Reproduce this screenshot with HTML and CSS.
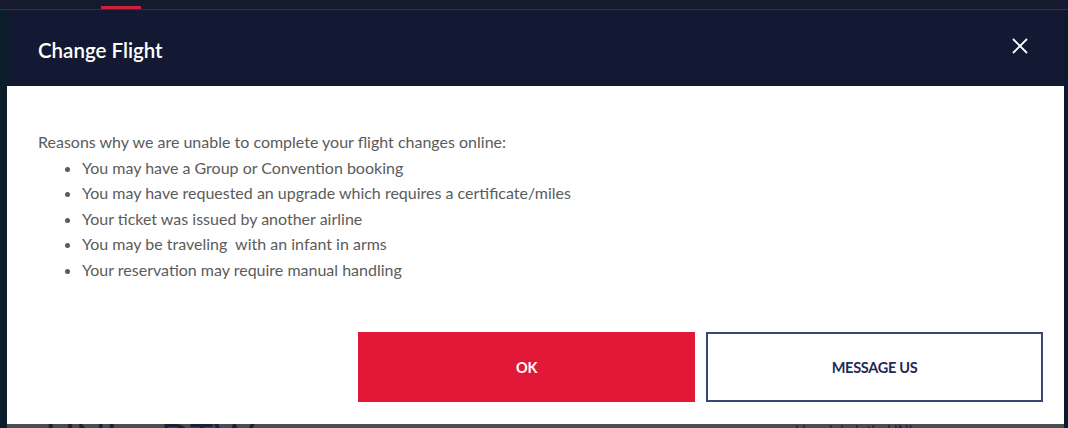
FILE: index.html
```html
<!DOCTYPE html>
<html lang="en">
<head>
    <meta charset="UTF-8">
    <meta name="viewport" content="width=device-width, initial-scale=1.0">
    <title>Change Flight</title>
    <link rel="stylesheet" href="styles.css">
</head>
<body>
    <div class="topnav">
        <span class="nav-active"></span>
    </div>
    <div class="stage">
        <div class="modal">
            <div class="modal-header">
                <h1>Change Flight</h1>
                <button type="button" class="close" aria-label="Close">
                    <svg width="16" height="16" viewBox="0 0 16 16"><path d="M1 1L15 15M15 1L1 15" stroke="#fff" stroke-width="1.8" fill="none"/></svg>
                </button>
            </div>
            <div class="modal-body">
                <p>Reasons why we are unable to complete your flight changes online:</p>
                <ul>
                    <li>You may have a Group or Convention booking</li>
                    <li>You may have requested an upgrade which requires a certificate/miles</li>
                    <li>Your ticket was issued by another airline</li>
                    <li>You may be traveling &nbsp;with an infant in arms</li>
                    <li>Your reservation may require manual handling</li>
                </ul>
            </div>
            <div class="modal-actions">
                <button type="button" class="btn btn-primary">OK</button>
                <button type="button" class="btn btn-outline">MESSAGE US</button>
            </div>
        </div>
    </div>
    <div class="below">
        <span class="route">HNL - DTW</span>
        <span class="airport">Honolulu Intl - HNL</span>
    </div>
</body>
</html>
```

FILE: styles.css
```css
html, body {
    margin: 0;
    height: 100%;
}
body {
    background-color: #0c1b2a;
    font-family: Lato, 'Open Sans', Arial, sans-serif;
    overflow: hidden;
}
.topnav {
    height: 10px;
    background: #151a2e;
    border-bottom: 1px solid #2e3450;
    box-sizing: border-box;
    position: relative;
}
.nav-active {
    position: absolute;
    left: 101px;
    top: 6px;
    width: 40px;
    height: 3px;
    background: #cf1f3a;
}
.stage {
    padding: 0 4px 0 7px;
    background: linear-gradient(to right, #0b2029 0, #0c1c2c 7px, #0d1a2b 100%);
}
.modal {
    height: 414px;
    background: #fff;
    display: flex;
    flex-direction: column;
}
.modal-header {
    height: 76px;
    background: #131933;
    display: flex;
    align-items: center;
    justify-content: space-between;
    padding: 4px 36px 0 31px;
    box-sizing: border-box;
}
.modal-header h1 {
    margin: 0;
    color: #fff;
    font-size: 20.5px;
    font-weight: 600;
}
.close {
    background: none;
    border: none;
    padding: 0;
    margin-top: -8px;
    cursor: pointer;
    display: flex;
}
.modal-body {
    padding: 43px 31px 0 31px;
    color: #5b5b5b;
    font-size: 16px;
    line-height: 25.6px;
}
.modal-body p {
    margin: 0;
}
.modal-body ul {
    margin: 0;
    padding-left: 44px;
}
.modal-actions {
    display: flex;
    justify-content: flex-end;
    gap: 11px;
    padding: 0 21px 0 0;
    margin-top: auto;
    margin-bottom: 22px;
}
.btn {
    width: 337px;
    height: 70px;
    font-family: Lato, Arial, sans-serif;
    font-size: 14.5px;
    font-weight: 700;
    letter-spacing: -0.3px;
    cursor: pointer;
}
.btn-primary {
    background: #e31837;
    color: #fff;
    border: none;
}
.btn-outline {
    background: #fff;
    color: #1d2a57;
    border: 2px solid #3c4674;
}
.below {
    height: 4px;
    background: #4c4d52;
    overflow: hidden;
    display: flex;
    align-items: flex-start;
    border-left: 7px solid #0b1d2a;
    border-right: 4px solid #0d1a2b;
}
.route {
    font-size: 40px;
    line-height: 40px;
    margin: -6px 0 0 38px;
    color: #1c2236;
}
.airport {
    font-size: 14px;
    line-height: 14px;
    margin: -1px 0 0 540px;
    color: #1c2236;
}
```
